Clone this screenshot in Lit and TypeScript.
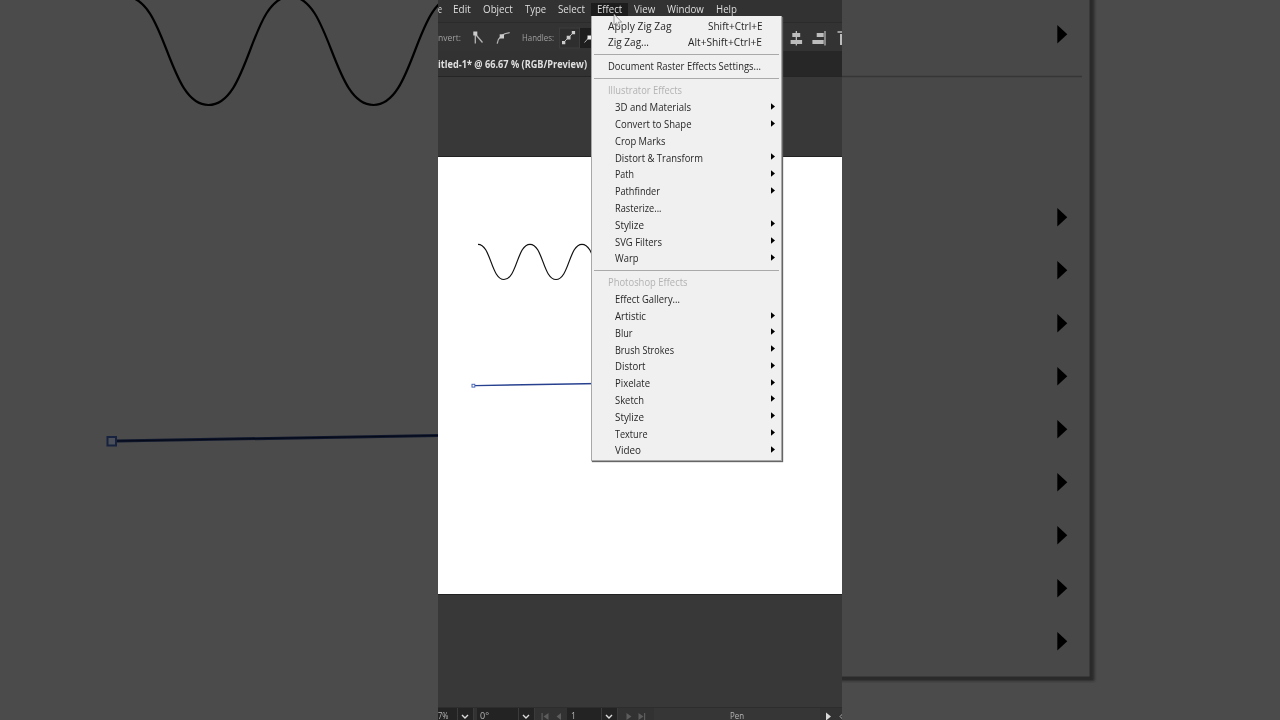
import { LitElement, html, css, svg, nothing } from "lit";
import { customElement } from "lit/decorators.js";

type Row = { t: string; w: number; key?: string; kw?: number; sub?: boolean };

const recent: Row[] = [
  { t: "Apply Zig Zag", w: 63.5, key: "Shift+Ctrl+E", kw: 54.5 },
  { t: "Zig Zag...", w: 41, key: "Alt+Shift+Ctrl+E", kw: 74 },
];
const illustrator: Row[] = [
  { t: "3D and Materials", w: 76, sub: true },
  { t: "Convert to Shape", w: 76.5, sub: true },
  { t: "Crop Marks", w: 50.5 },
  { t: "Distort & Transform", w: 88, sub: true },
  { t: "Path", w: 19, sub: true },
  { t: "Pathfinder", w: 45, sub: true },
  { t: "Rasterize...", w: 46.5 },
  { t: "Stylize", w: 29, sub: true },
  { t: "SVG Filters", w: 47, sub: true },
  { t: "Warp", w: 23.5, sub: true },
];
const photoshop: Row[] = [
  { t: "Effect Gallery...", w: 65 },
  { t: "Artistic", w: 31, sub: true },
  { t: "Blur", w: 17.5, sub: true },
  { t: "Brush Strokes", w: 59, sub: true },
  { t: "Distort", w: 30.5, sub: true },
  { t: "Pixelate", w: 35, sub: true },
  { t: "Sketch", w: 29, sub: true },
  { t: "Stylize", w: 29, sub: true },
  { t: "Texture", w: 32.5, sub: true },
  { t: "Video", w: 26, sub: true },
];
const menus = [
  { t: "Edit", w: 17.7 }, { t: "Object", w: 29.8 }, { t: "Type", w: 21.2 }, { t: "Select", w: 27 },
  { t: "Effect", w: 25.3 }, { t: "View", w: 21.2 }, { t: "Window", w: 36.8 }, { t: "Help", w: 21 },
];

/* A single line of text fitted to a given width. */
@customElement("fit-text")
export class FitText extends LitElement {
  static properties = { text: {}, width: { type: Number } };
  declare text: string;
  declare width: number;
  static styles = css`
    :host { display: inline-block; white-space: pre; flex: none; }
    .t { display: inline-block; transform-origin: 0 50%; }
  `;
  render() {
    return html`<span class="t">${this.text}</span>`;
  }
  updated() {
    const el = this.renderRoot.querySelector(".t") as HTMLElement;
    this.style.width = `${this.width}px`;
    const fit = () => {
      el.style.transform = "none";
      const w = el.getBoundingClientRect().width;
      if (w > 0) el.style.transform = `scaleX(${this.width / w})`;
    };
    fit();
    document.fonts?.ready.then(fit);
  }
}

const fit = (t: string, w: number) => html`<fit-text .text=${t} .width=${w}></fit-text>`;

@customElement("effect-menu")
export class EffectMenu extends LitElement {
  static styles = css`
    :host {
      display: block; box-sizing: border-box; width: 191px; height: 444.5px; padding-top: 2.200px;
      background: #f0f0f0; color: #262626; font-size: 10px;
      border: solid #a8a8a8; border-width: 0 1px 1px;
      box-shadow: 1px 1px 1px #666;
    }
    .row { height: 16.8px; display: flex; align-items: center; padding: 0 6.500px 0 22.800px; }
    .top { height: 16.1px; padding: 0 19px 0 16px; justify-content: space-between; }
    .head { padding-left: 16px; color: #b2b2b2; }
    .sub { justify-content: space-between; }
    .arrow { width: 4px; height: 7px; margin-bottom: 2px; fill: #000; }
    .sep { height: 7.800px; display: flex; align-items: center; padding: 0 2px; }
    .last { height: 7.200px; }
    .sep::before { content: ""; flex: 1; height: 1px; background: #a9a9a9; }
  `;
  private row(r: Row) {
    return html`<div class="row ${r.sub ? "sub" : ""}">
      ${fit(r.t, r.w)}
      ${r.sub ? html`<svg class="arrow" viewBox="0 0 4 7"><path d="M0 .3 4 3.5 0 6.7z" /></svg>` : nothing}
    </div>`;
  }
  render() {
    return html`
      ${recent.map((r) => html`<div class="row top">${fit(r.t, r.w)}${fit(r.key!, r.kw!)}</div>`)}
      <div class="sep"></div>
      <div class="row top">${fit("Document Raster Effects Settings...", 153)}</div>
      <div class="sep"></div>
      <div class="row head">${fit("Illustrator Effects", 74)}</div>
      ${illustrator.map((r) => this.row(r))}
      <div class="sep last"></div>
      <div class="row head">${fit("Photoshop Effects", 79.5)}</div>
      ${photoshop.map((r) => this.row(r))}
    `;
  }
}

@customElement("app-root")
export class AppRoot extends LitElement {
  static styles = css`
    :host {
      display: grid; grid-template-columns: 438px 404px 438px; width: 1280px; height: 720px;
      overflow: hidden; background: #4b4b4b; font-family: "Open Sans", "Noto Sans", sans-serif;
    }
    svg { display: block; flex: none; }
    .side { overflow: hidden; }
    .app { position: relative; overflow: hidden; display: flex; flex-direction: column; background: #383838; }
    .menubar {
      height: 22px; flex: none; display: flex; align-items: flex-start; background: #323232;
      color: #dedede; font-size: 10.6px; line-height: 18px;
    }
    .file { width: 9.300px; }
    .mi { padding: 0 6px; height: 18px; }
    .mi.on { background: linear-gradient(#323232 3px, #1d1d1d 3px); }
    .control {
      height: 29px; flex: none; box-sizing: border-box; display: flex; align-items: center;
      background: #333; border-top: 1px solid #2b2b2b; color: #a0a0a0; font-size: 9.8px;
      padding-top: 1px;
    }
    .tabs { height: 26px; flex: none; display: flex; background: #272727; border-bottom: 1px solid #252525; box-sizing: border-box; }
    .tab { width: 160px; background: #323232; color: #e0e0e0; font-size: 10.2px; font-weight: 700; line-height: 26.500px; height: 25px; }
    .canvas { flex: 1; display: flex; flex-direction: column; padding-top: 79px; }
    .board { height: 437px; background: #fff; border-top: 1px solid #222; border-bottom: 1px solid #222; }
    .status {
      height: 12px; flex: none; overflow: hidden; display: flex; background: #323232; color: #b5b5b5;
      font-size: 9.500px; line-height: 15px; border-top: 1px solid #2d2d2d;
    }
    .status svg { margin-top: .5px; }
    .box { display: flex; height: 15px; background: #232323; border-right: 1px solid #3b3b3b; box-sizing: border-box; }
    .pct { width: 20px; }
    .rot { width: 42px; padding-left: 3px; margin-left: 3px; }
    .one { width: 35px; padding-left: 4px; }
    .drop { width: 16px; }
    .pen { width: 166px; margin-left: 1px; background: #363636; display: flex; justify-content: center; }
    .menu { position: absolute; left: 153px; top: 16px; }
    .cursor { position: absolute; left: 175px; top: 13px; }
  `;

  private chevron() {
    return html`<div class="box drop"><svg width="15" height="13" viewBox="0 0 15 13"><path d="M4 6 7 9 10 6" fill="none" stroke="#dcdcdc" stroke-width="1.4" /></svg></div>`;
  }

  render() {
    return html`
      <div class="side">
        <svg width="438" height="720" viewBox="0 0 438 720" fill="none">
          <path d="M125-3.500C167-3.500 167 105 208.500 105S250-3.500 290.500-3.500S332 105 373.500 105S415-3.500 456-3.500" stroke="#000" stroke-width="2.200" />
          <path d="M116 441 438 435.500" stroke="#10182e" stroke-width="3" />
          <path d="M116 441 438 435.500" stroke="#060a18" stroke-width="1.200" />
          <rect x="107.500" y="437" width="8.500" height="8.500" fill="#4b4f59" stroke="#17223f" stroke-width="2" />
        </svg>
      </div>
      <div class="app">
        <div class="menubar">
          <div class="file">${fit("e", 4)}</div>
          ${menus.map((m) => html`<div class="mi ${m.t === "Effect" ? "on" : ""}">${fit(m.t, m.w)}</div>`)}
        </div>
        <div class="control">
          ${fit("nvert:", 23)}
          <svg width="61" height="26" viewBox="0 0 61 26" fill="none" stroke="#b4b4b4">
            <path d="M14.300 8V18.500M14.300 9 21.500 17.500" stroke-width="1.300" />
            <rect x="12.300" y="6.500" width="4" height="4" fill="#ccc" stroke="none" />
            <path d="M36.200 18.700C37 13.500 39.500 8.500 48.700 7.600" stroke-width="1.300" />
            <rect x="38.700" y="9.300" width="4.300" height="4.200" fill="#ccc" stroke="none" />
          </svg>
          ${fit("Handles:", 32)}
          <svg width="37" height="26" viewBox="0 0 37 26" fill="none">
            <rect x="5.500" y="3" width="20" height="20" fill="#2e2e2e" stroke="#3c3c3c" />
            <rect x="26" y="3" width="11" height="20" fill="#1e1e1e" />
            <path d="M9.500 17.500 19.500 7.500" stroke="#b4b4b4" />
            <path d="M8 16h3.300v3.300H8zM12.700 10.800h3.800v3.800h-3.800zM17.800 6h3.300v3.300h-3.300z" fill="#ccc" />
            <path d="M30.500 17.500 34.500 13" stroke="#b4b4b4" /><path d="M33.500 10.500h4v4h-4z" fill="#eee" />
          </svg>
          <svg width="251" height="26" viewBox="0 0 251 26" fill="#bdbdbd">
            <path d="M204.700 6h1.300v14.500h-1.300zM201.300 8h7.900v4h-7.900zM199.600 15h11.500v4h-11.500z" />
            <path d="M233.400 6h1.200v14.500h-1.200zM225.700 8h7v4h-7zM221.400 15h11.300v4h-11.300z" />
            <path d="M246.500 6.300h5v1.400h-5zM249 9h3v11h-3z" />
          </svg>
        </div>
        <div class="tabs">
          <div class="tab">${fit("itled-1* @ 66.67 % (RGB/Preview)", 149)}</div>
        </div>
        <div class="canvas">
          <div class="board">
            <svg width="404" height="437" viewBox="438 157 404 437" fill="none">
              <path d="M478 244.300C491 244.300 491 279.500 504 279.500S517 244.300 530 244.300S543 279.500 556 279.500S569 244.300 582 244.300S595 279.500 608 279.500" stroke="#111" stroke-width="1.200" />
              <path d="M475 385.600 600 383.500" stroke="#27418f" stroke-width="1.400" />
              <rect x="472" y="384.300" width="2.800" height="2.800" fill="#fff" stroke="#4b69bd" />
            </svg>
          </div>
        </div>
        <div class="status">
          <div class="box pct">${fit("7%", 10.5)}</div>${this.chevron()}
          <div class="box rot">${fit("0°", 9)}</div>${this.chevron()}
          <svg width="32" height="13" viewBox="0 0 32 13" fill="#5c5c5c"><path d="M6.500 4h1.200v7H6.500zM13.500 4v7L8.500 7.500zM26 4v7L21.500 7.500z" /></svg>
          <div class="box one">${fit("1", 5)}</div>${this.chevron()}
          <svg width="35" height="13" viewBox="0 0 35 13" fill="#5c5c5c"><path d="M8.500 4v7L13.500 7.500zM20.500 4v7L25.500 7.500zM26 4h1.200v7H26z" /></svg>
          <div class="pen">${fit("Pen", 14)}</div>
          <svg width="22" height="13" viewBox="0 0 22 13" fill="#d8d8d8"><path d="M6 3.500v8L11 7.500z" /><path d="M22.500 5 20 7.500l2.500 2.500" fill="none" stroke="#aaa" /></svg>
        </div>
        <effect-menu class="menu"></effect-menu>
        <svg class="cursor" width="10" height="15" viewBox="0 0 10 15"><path d="M1 1V12L3.500 9.700 5.300 13.800 7 13 5.300 9.200H8.700z" fill="#f4f4f4" stroke="#777" stroke-width=".7" /></svg>
      </div>
      <div class="side">
        <svg width="438" height="720" viewBox="842 0 438 720">
          <defs><filter id="soft" x="-5%" y="-5%" width="110%" height="110%"><feGaussianBlur stdDeviation="1" /></filter></defs>
          <path d="M830-10H1094.500V681H830z" fill="#2b2b2b" filter="url(#soft)" />
          <path d="M842 0H1089.500V676.500H842z" fill="#484848" />
          <path d="M842 75.800H1082V77.300H842z" fill="#363636" />
          ${[34, 217, 270, 323, 376, 429, 482, 535, 588, 641].map(
            (y) => svg`<path d=${`M1057.300 ${y - 9}V${y + 9.5}L1067.300 ${y + 0.2}z`} fill="#000" />`
          )}
        </svg>
      </div>
    `;
  }
}
